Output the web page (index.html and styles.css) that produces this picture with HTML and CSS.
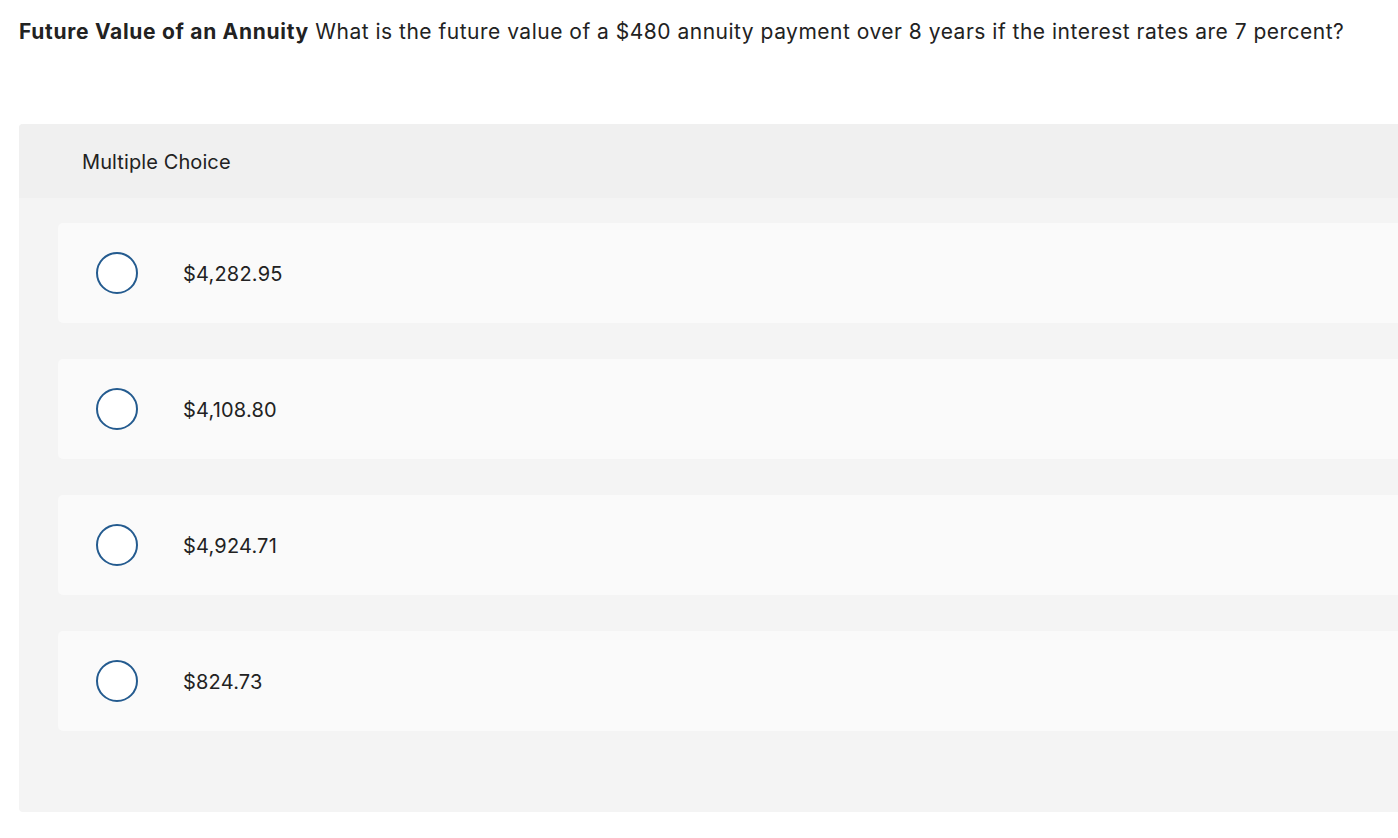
FILE: index.html
```html
<!DOCTYPE html>
<html>
<head>
    <title>Future Value of an Annuity</title>
    <link rel="stylesheet" href="styles.css">
</head>
<body>
    <p class="question"><strong>Future Value of an Annuity</strong> What is the future value of a $480 annuity payment over 8 years if the interest rates are 7 percent?</p>

    <div class="choice-panel">
        <div class="choice-header">Multiple Choice</div>
        <div class="choice-list">
            <label class="choice">
                <span class="radio"></span>
                <span class="choice-text">$4,282.95</span>
            </label>
            <label class="choice">
                <span class="radio"></span>
                <span class="choice-text">$4,108.80</span>
            </label>
            <label class="choice">
                <span class="radio"></span>
                <span class="choice-text">$4,924.71</span>
            </label>
            <label class="choice">
                <span class="radio"></span>
                <span class="choice-text">$824.73</span>
            </label>
        </div>
    </div>
</body>
</html>
```

FILE: styles.css
```css
body {
    margin: 0;
    padding: 0;
    background: #ffffff;
    color: #222222;
    font-family: Inter, "Liberation Sans", sans-serif;
    overflow: hidden;
}

.question {
    margin: 0;
    padding: 19px 19px 0;
    height: 25px;
    font-size: 21px;
    line-height: 26px;
    letter-spacing: 0.5px;
    white-space: nowrap;
}

.question strong {
    font-weight: 700;
    letter-spacing: 0.7px;
}

.choice-panel {
    margin: 80px 0 0 19px;
    width: 1400px;
    background: #f4f4f4;
    border-radius: 4px;
    padding-bottom: 81px;
}

.choice-header {
    height: 74px;
    display: flex;
    align-items: center;
    padding-left: 63px;
    padding-top: 1px;
    box-sizing: border-box;
    background: #f0f0f0;
    border-radius: 4px 4px 0 0;
    font-size: 20px;
    letter-spacing: 0.1px;
}

.choice-list {
    display: flex;
    flex-direction: column;
    gap: 36px;
    padding: 25px 0 0 39px;
}

.choice {
    height: 100px;
    display: flex;
    align-items: center;
    background: #fafafa;
    border-radius: 5px;
    padding-left: 38px;
}

.radio {
    width: 38px;
    height: 38px;
    border: 2px solid #245b8f;
    border-radius: 50%;
    background: #ffffff;
    flex-shrink: 0;
}

.choice-text {
    margin-left: 45px;
    padding-top: 2px;
    font-size: 20px;
    letter-spacing: 0.2px;
}
```
